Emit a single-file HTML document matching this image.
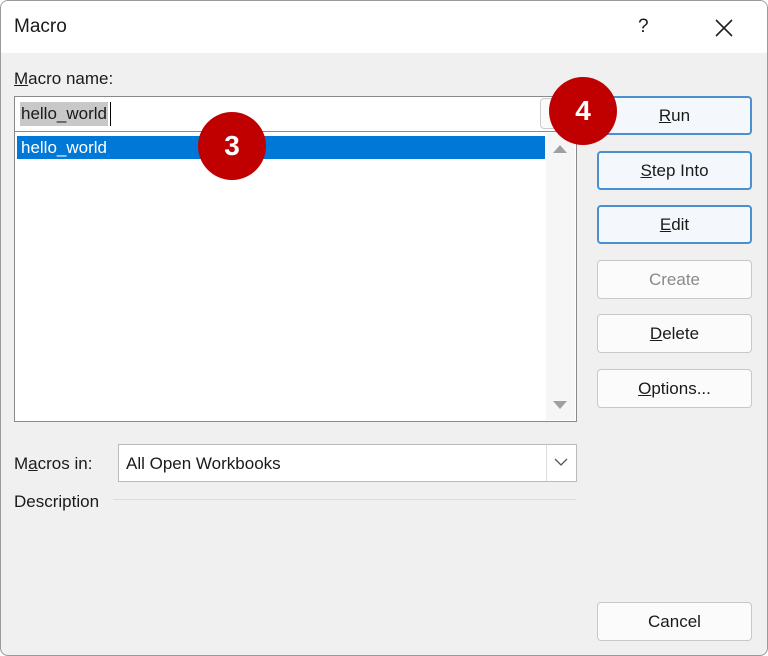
<!DOCTYPE html>
<html><head><style>
*{box-sizing:border-box;margin:0;padding:0}
body{width:768px;height:656px;background:#fff;font-family:"Liberation Sans",sans-serif;position:relative;overflow:hidden;color:#1a1a1a}
.win{position:absolute;left:0;top:0;width:768px;height:656px;border:1px solid #9a9a9a;border-radius:8px;background:#f0f0f0;overflow:hidden}
.title{position:absolute;left:0;top:0;width:100%;height:52px;background:#fff}
.abs{position:absolute}
.t{font-size:17px}
.btn{position:absolute;left:596px;width:155px;height:39px;border:1px solid #c8c8c8;border-radius:4px;background:#fbfbfb;font-size:17px;text-align:center;line-height:37px}
.btn.a{border:2px solid #4a90d0;background:#f4f8fc;line-height:35px}
.btn.d{color:#8a8a8a}
u{text-decoration:underline}
.circ{position:absolute;width:68px;height:68px;border-radius:50%;background:#c00000;color:#fff;font-weight:bold;font-size:28px;text-align:center;line-height:68px}
</style></head><body>
<div class="win">
<div class="title"></div>
<div class="abs" style="left:13px;top:15px;font-size:19px">Macro</div>
<div class="abs" style="left:637px;top:15px;font-size:19px">?</div>
<svg class="abs" style="left:713px;top:17px" width="20" height="20"><path d="M2 2L18 18M18 2L2 18" stroke="#222" stroke-width="1.6"/></svg>
<div class="abs t" style="left:13px;top:68px"><u>M</u>acro name:</div>
<div class="abs" style="left:13px;top:95px;width:562px;height:36px;background:#fff;border:1px solid #8a8a8a"></div>
<div class="abs" style="left:539px;top:97px;width:34px;height:31px;border:1px solid #ccc;border-radius:4px;background:#fafafa"></div>
<div class="abs t" style="left:19px;top:101px;background:#c8c8c8;padding:1px 1px;line-height:22px">hello_world</div>
<div class="abs" style="left:109px;top:101px;width:1px;height:24px;background:#000"></div>
<div class="abs" style="left:13px;top:130px;width:563px;height:291px;background:#fff;border:1px solid #8a8a8a"></div>
<div class="abs" style="left:545px;top:132px;width:29px;height:287px;background:#f6f6f6"></div>
<div class="abs t" style="left:16px;top:135px;width:528px;height:23px;background:#0078d7;color:#fff;padding-left:4px;line-height:23px">hello_world</div>
<svg class="abs" style="left:551px;top:142px" width="16" height="12"><path d="M1 10L8 2L15 10Z" fill="#a0a0a0"/></svg>
<svg class="abs" style="left:551px;top:398px" width="16" height="12"><path d="M1 2L8 10L15 2Z" fill="#a0a0a0"/></svg>
<div class="abs t" style="left:13px;top:453px">M<u>a</u>cros in:</div>
<div class="abs" style="left:117px;top:443px;width:459px;height:38px;background:#fff;border:1px solid #bbb"></div>
<div class="abs" style="left:545px;top:444px;width:1px;height:36px;background:#ddd"></div>
<svg class="abs" style="left:552px;top:456px" width="16" height="10"><path d="M2 2L8 8L14 2" stroke="#555" stroke-width="1.3" fill="none"/></svg>
<div class="abs t" style="left:125px;top:453px">All Open Workbooks</div>
<div class="abs t" style="left:13px;top:491px">Description</div>
<div class="abs" style="left:112px;top:498px;width:463px;height:1px;background:#ddd"></div>
<div class="btn a" style="top:95px"><u>R</u>un</div>
<div class="btn a" style="top:150px"><u>S</u>tep Into</div>
<div class="btn a" style="top:204px"><u>E</u>dit</div>
<div class="btn d" style="top:259px">Create</div>
<div class="btn" style="top:313px"><u>D</u>elete</div>
<div class="btn" style="top:368px"><u>O</u>ptions...</div>
<div class="btn" style="top:601px">Cancel</div>
<div class="circ" style="left:197px;top:111px">3</div>
<div class="circ" style="left:548px;top:76px">4</div>
</div>
</body></html>
